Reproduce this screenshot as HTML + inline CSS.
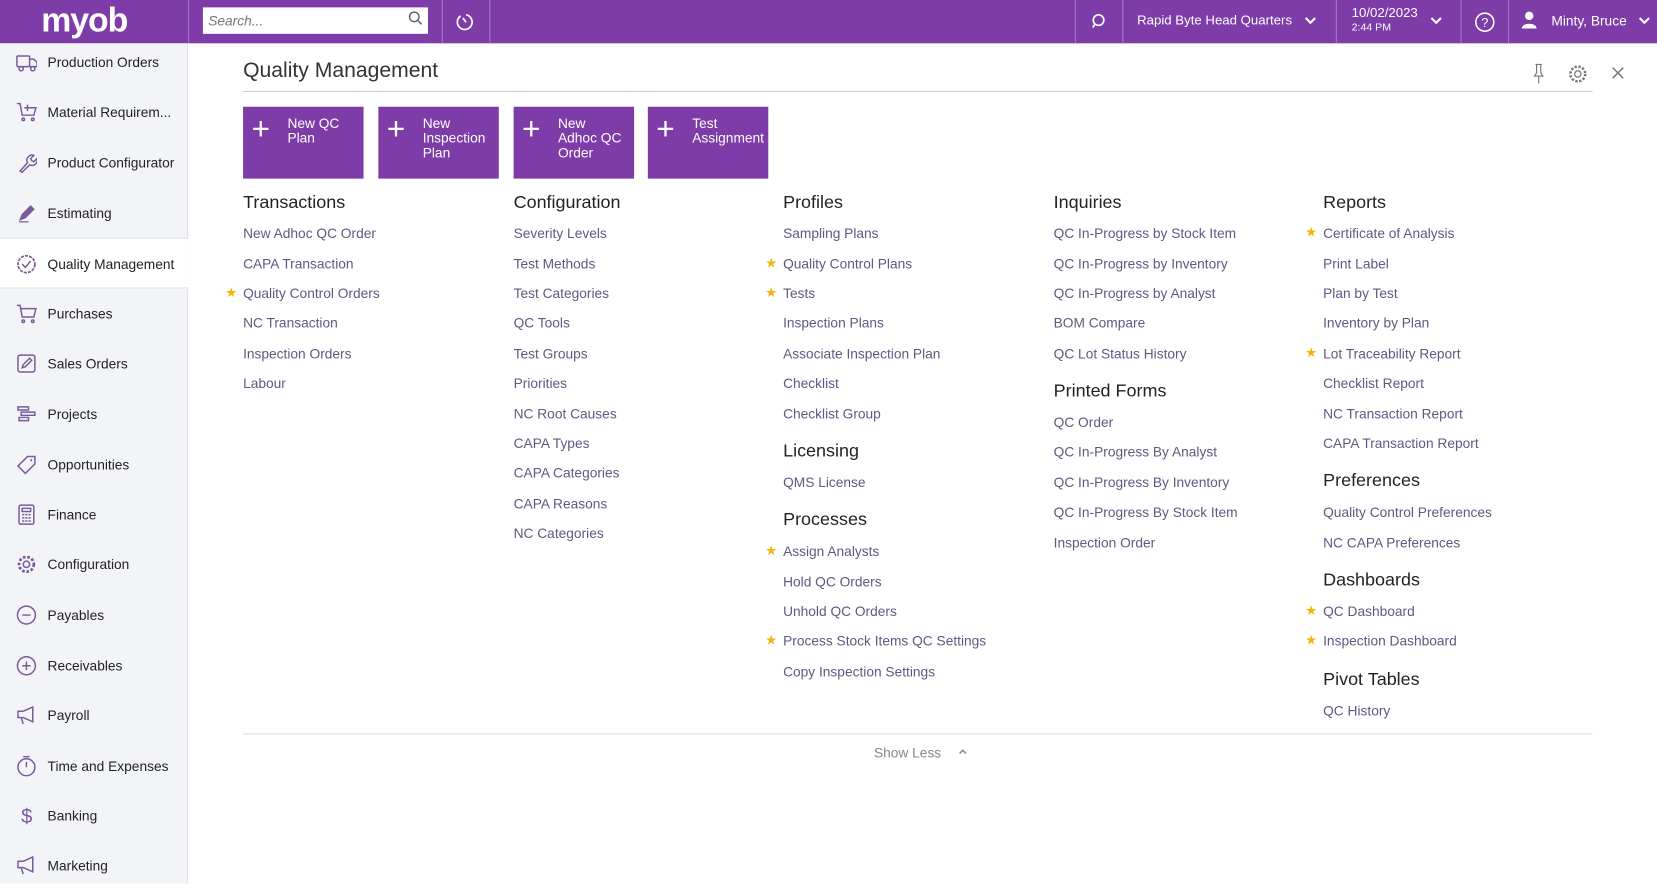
<!DOCTYPE html>
<html><head><meta charset="utf-8"><style>
*{margin:0;padding:0;box-sizing:border-box}
html,body{width:1657px;height:883px;overflow:hidden;background:#fff;font-family:"Liberation Sans",Arial,sans-serif}
#w{position:absolute;left:0;top:0;width:1568px;height:836px;transform:scale(1.0568);transform-origin:0 0}
.hdr{position:absolute;left:0;top:0;width:1568px;height:41px;background:#7e3ca8}
.vs{position:absolute;top:0;width:1px;height:41px;background:#a47bc2}
.t{position:absolute;white-space:nowrap}
.side{position:absolute;left:0;top:41px;width:178px;height:795px;background:#f3f4f8;border-right:1px solid #dfe1e6}
.si{position:absolute;left:0;width:178px;height:47px}
.si span{position:absolute;left:45px;top:50%;transform:translateY(-50%);font-size:13px;color:#222}
.si svg{position:absolute;left:15px;top:50%;transform:translateY(-50%)}
.h{position:absolute;font-size:17px;color:#222;white-space:nowrap}
.l{position:absolute;font-size:13px;color:#645682;white-space:nowrap}
.star{position:absolute;color:#f5b50a;font-size:13px}
.btn{position:absolute;top:101px;width:114px;height:68px;background:#7e3ca8}
.btn .p{position:absolute;left:8px;top:7px;color:#fff;font-size:30px;line-height:30px;font-weight:300}
.btn .bt{position:absolute;left:42px;top:9px;color:#fff;font-size:13px;line-height:14px}
</style></head><body><div id="w">
<div class="hdr">
<div class="t" style="left:39px;top:1px;font-size:32px;font-weight:bold;color:#fff;letter-spacing:-1px">myob</div>
<div class="vs" style="left:178px"></div>
<div style="position:absolute;left:192px;top:7px;width:213px;height:25px;background:#fff"></div>
<div class="t" style="left:197px;top:12px;font-size:13px;font-style:italic;color:#777">Search...</div>
<svg style="position:absolute;left:386px;top:10px" width="14" height="14" viewBox="0 0 14 14"><circle cx="6" cy="6" r="4.5" fill="none" stroke="#666" stroke-width="1.4"/><path d="M9.5 9.5L13 13" stroke="#666" stroke-width="1.4"/></svg>
<div class="vs" style="left:418px"></div>
<svg style="position:absolute;left:431px;top:11px" width="20" height="20" viewBox="0 0 20 20"><path d="M5 4 A7 7 0 1 0 10 3" fill="none" stroke="#fff" stroke-width="1.6"/><path d="M10 10L7 6" stroke="#fff" stroke-width="1.6"/></svg>
<div class="vs" style="left:463px"></div>
<div class="vs" style="left:1017px"></div>
<svg style="position:absolute;left:1031px;top:12px" width="16" height="16" viewBox="0 0 16 16"><circle cx="8.5" cy="7" r="5" fill="none" stroke="#fff" stroke-width="1.6"/><path d="M5 11L3 14" stroke="#fff" stroke-width="1.6"/></svg>
<div class="vs" style="left:1062px"></div>
<div class="t" style="left:1076px;top:12px;font-size:12.5px;color:#fff">Rapid Byte Head Quarters</div>
<svg style="position:absolute;left:1234px;top:15px" width="12" height="9" viewBox="0 0 12 9"><path d="M1.5 2L6 6.5L10.5 2" fill="none" stroke="#fff" stroke-width="2"/></svg>
<div class="vs" style="left:1264px"></div>
<div class="t" style="left:1279px;top:5px;font-size:12.5px;color:#fff">10/02/2023</div>
<div class="t" style="left:1279px;top:21px;font-size:10px;color:#fff">2:44 PM</div>
<svg style="position:absolute;left:1353px;top:15px" width="12" height="9" viewBox="0 0 12 9"><path d="M1.5 2L6 6.5L10.5 2" fill="none" stroke="#fff" stroke-width="2"/></svg>
<div class="vs" style="left:1382px"></div>
<svg style="position:absolute;left:1395px;top:11px" width="20" height="20" viewBox="0 0 20 20"><circle cx="10" cy="10" r="8.5" fill="none" stroke="#fff" stroke-width="1.5"/><text x="10" y="14.5" font-size="12" fill="#fff" text-anchor="middle" font-family="Liberation Sans">?</text></svg>
<div class="vs" style="left:1427px"></div>
<svg style="position:absolute;left:1439px;top:10px" width="16" height="18" viewBox="0 0 16 18"><circle cx="8" cy="5" r="4" fill="#fff"/><path d="M1 17C1 11 15 11 15 17Z" fill="#fff"/></svg>
<div class="t" style="left:1468px;top:12px;font-size:13px;color:#fff">Minty, Bruce</div>
<svg style="position:absolute;left:1550px;top:15px" width="12" height="9" viewBox="0 0 12 9"><path d="M1.5 2L6 6.5L10.5 2" fill="none" stroke="#fff" stroke-width="2"/></svg>
</div>
<div class="side">
<div style="position:absolute;left:0;top:184px;width:178px;height:48px;background:#fff;border-top:1px solid #e2e4ea;border-bottom:1px solid #e2e4ea"></div>
</div>
<div id="items"></div>
<div class="t" style="left:230px;top:56px;font-size:20px;color:#333">Quality Management</div>
<div style="position:absolute;left:230px;top:86px;width:1277px;height:1px;background:#ccc"></div>
<svg style="position:absolute;left:1449px;top:60px" width="14" height="20" viewBox="0 0 14 20"><path d="M4 1H10M5 1V9L3 12H11L9 9V1M7 12V19" fill="none" stroke="#777" stroke-width="1.1"/></svg>
<svg style="position:absolute;left:1483px;top:60px" width="20" height="20" viewBox="0 0 20 20"><circle cx="10" cy="10" r="3" fill="none" stroke="#777" stroke-width="1.2"/><circle cx="10" cy="10" r="7" fill="none" stroke="#777" stroke-width="2.4" stroke-dasharray="2.2 1.5"/></svg>
<svg style="position:absolute;left:1524px;top:62px" width="14" height="14" viewBox="0 0 14 14"><path d="M2 2L12 12M12 2L2 12" stroke="#777" stroke-width="1.4"/></svg>
<div class="btn" style="left:230px"><div class="p">+</div><div class="bt">New QC<br>Plan</div></div>
<div class="btn" style="left:358px"><div class="p">+</div><div class="bt">New<br>Inspection<br>Plan</div></div>
<div class="btn" style="left:486px"><div class="p">+</div><div class="bt">New<br>Adhoc QC<br>Order</div></div>
<div class="btn" style="left:613px"><div class="p">+</div><div class="bt">Test<br>Assignment</div></div>
<div id="cols"></div>
<div style="position:absolute;left:230px;top:694px;width:1277px;height:1px;background:#ddd"></div>
<div class="t" style="left:827px;top:705px;font-size:13px;color:#888">Show Less</div>
<svg style="position:absolute;left:906px;top:707px" width="10" height="8" viewBox="0 0 10 8"><path d="M2 6L5 3L8 6" fill="none" stroke="#888" stroke-width="1.5"/></svg>
</div>
<script>
var ic='stroke="#7a5a9a" fill="none" stroke-width="1.4"';
var items=[["Production Orders",58,'<rect x="1" y="4" width="12" height="10" rx="1" '+ic+'/><path d="M13 7H17L20 10V14H13" '+ic+'/><circle cx="5" cy="16" r="2" '+ic+'/><circle cx="16" cy="16" r="2" '+ic+'/>'],
["Material Requirem...",105,'<path d="M1 2H4L6 13H17L19 6H8M11 3V9M8 6H14" '+ic+'/><circle cx="7" cy="17" r="1.2" '+ic+'/><circle cx="16" cy="17" r="1.2" '+ic+'/>'],
["Product Configurator",153,'<path d="M4 18L11 10A5 5 0 0 1 17 3L14 6L15 8L17 9L20 6A5 5 0 0 1 13 12L6 19Z" '+ic+'/>'],
["Estimating",201,'<path d="M4 16L6 11L14 3L17 6L9 14ZM3 18H12" stroke="#7a5a9a" fill="#7a5a9a" stroke-width="1.2"/>'],
["Quality Management",249,'<circle cx="10" cy="10" r="8" stroke="#7a5a9a" fill="none" stroke-width="1.6" stroke-dasharray="3 1"/><path d="M6 10L9 13L14 7" '+ic+'/>'],
["Purchases",296,'<path d="M1 2H4L6 13H17L19 5H5" '+ic+'/><circle cx="7" cy="17" r="1.2" '+ic+'/><circle cx="16" cy="17" r="1.2" '+ic+'/>'],
["Sales Orders",343,'<rect x="2" y="2" width="16" height="16" rx="2" '+ic+'/><path d="M6 14L7 11L13 5L15 7L9 13Z" '+ic+'/>'],
["Projects",391,'<path d="M2 3H12V6H2ZM5 8H18V11H5ZM3 13H12V16H3Z" '+ic+'/>'],
["Opportunities",439,'<path d="M2 11L11 2H18V9L9 18Z" '+ic+'/><circle cx="14.5" cy="5.5" r="1" fill="#7a5a9a"/>'],
["Finance",486,'<rect x="3" y="1" width="14" height="18" rx="1.5" '+ic+'/><path d="M6 4H14V7H6ZM6 10H8M9 10H11M12 10H14M6 13H8M9 13H11M12 13H14M6 16H8M9 16H11M12 16H14" '+ic+'/>'],
["Configuration",533,'<circle cx="10" cy="10" r="3" '+ic+'/><circle cx="10" cy="10" r="7" stroke="#7a5a9a" fill="none" stroke-width="2.6" stroke-dasharray="2.5 1.7"/>'],
["Payables",581,'<circle cx="10" cy="10" r="8.5" '+ic+'/><path d="M6 10H14" '+ic+'/>'],
["Receivables",629,'<circle cx="10" cy="10" r="8.5" '+ic+'/><path d="M6 10H14M10 6V14" '+ic+'/>'],
["Payroll",676,'<path d="M2 6H7L16 2V16L7 12H2ZM5 12L7 18" '+ic+'/>'],
["Time and Expenses",724,'<circle cx="10" cy="11" r="8" '+ic+'/><path d="M7 1H13M10 11V6" '+ic+'/>'],
["Banking",771,'<text x="5" y="17" font-size="19" fill="#7a5a9a" font-family="Liberation Sans">$</text>'],
["Marketing",818,'<path d="M2 6H7L16 2V16L7 12H2ZM5 12L7 18" '+ic+'/>']];
var h='';items.forEach(function(a){h+='<div class="si" style="top:'+(a[1]-23)+'px"><svg width="20" height="20" viewBox="0 0 20 20">'+a[2]+'</svg><span>'+a[0]+'</span></div>';});
document.getElementById('items').innerHTML=h;
var cols=[[230,[["H","Transactions",191],["New Adhoc QC Order",220],["CAPA Transaction",249],["*Quality Control Orders",277],["NC Transaction",305],["Inspection Orders",334],["Labour",362]]],
[486,[["H","Configuration",191],["Severity Levels",220],["Test Methods",249],["Test Categories",277],["QC Tools",305],["Test Groups",334],["Priorities",362],["NC Root Causes",391],["CAPA Types",419],["CAPA Categories",447],["CAPA Reasons",476],["NC Categories",504]]],
[741,[["H","Profiles",191],["Sampling Plans",220],["*Quality Control Plans",249],["*Tests",277],["Inspection Plans",305],["Associate Inspection Plan",334],["Checklist",362],["Checklist Group",391],["H","Licensing",426],["QMS License",456],["H","Processes",491],["*Assign Analysts",521],["Hold QC Orders",550],["Unhold QC Orders",578],["*Process Stock Items QC Settings",606],["Copy Inspection Settings",635]]],
[997,[["H","Inquiries",191],["QC In-Progress by Stock Item",220],["QC In-Progress by Inventory",249],["QC In-Progress by Analyst",277],["BOM Compare",305],["QC Lot Status History",334],["H","Printed Forms",369],["QC Order",399],["QC In-Progress By Analyst",427],["QC In-Progress By Inventory",456],["QC In-Progress By Stock Item",484],["Inspection Order",513]]],
[1252,[["H","Reports",191],["*Certificate of Analysis",220],["Print Label",249],["Plan by Test",277],["Inventory by Plan",305],["*Lot Traceability Report",334],["Checklist Report",362],["NC Transaction Report",391],["CAPA Transaction Report",419],["H","Preferences",454],["Quality Control Preferences",484],["NC CAPA Preferences",513],["H","Dashboards",548],["*QC Dashboard",578],["*Inspection Dashboard",606],["H","Pivot Tables",642],["QC History",672]]]];
h='';cols.forEach(function(c){var x=c[0];c[1].forEach(function(e){if(e[0]=="H"){h+='<div class="h" style="left:'+x+'px;top:'+(e[2]-9)+'px">'+e[1]+'</div>';}else{var s=e[0],y=e[1];if(s[0]=="*"){s=s.slice(1);h+='<div class="star" style="left:'+(x-17)+'px;top:'+(y-8)+'px">★</div>';}h+='<div class="l" style="left:'+x+'px;top:'+(y-7)+'px">'+s+'</div>';}});});
document.getElementById('cols').innerHTML=h;
</script>
</body></html>
